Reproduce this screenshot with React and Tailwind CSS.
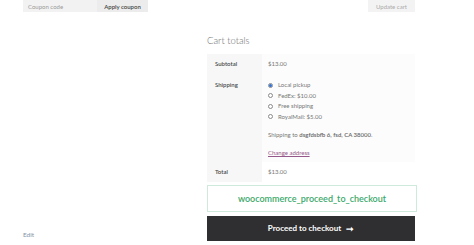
import React from "react";

const rates = [
  { id: "local", label: "Local pickup", checked: true },
  { id: "fedex", label: "FedEx: $10.00" },
  { id: "free", label: "Free shipping" },
  { id: "royal", label: "RoyalMail: $5.00" },
];

const Radio = ({ checked }) => (
  <span className="flex h-[5px] w-[5px] items-center justify-center rounded-full border-[0.8px] border-[#8a8a8a] bg-white">
    {checked && <span className="h-[3px] w-[3px] rounded-full bg-[#2f6fd6]" />}
  </span>
);

const CartTotals = () => (
  <div className="flex w-[210px] flex-col">
    <h2 className="mt-[23px] text-[9.5px] leading-[12px] font-light text-[#6d6d6d]">Cart totals</h2>

    <div className="mt-[7px] flex w-[208px] flex-col text-[6px] leading-[10px]">
      {/* subtotal */}
      <div className="flex">
        <div className="w-[55px] bg-[#f7f7f7] pt-[5px] pb-[6px] pl-[8px] font-semibold text-[#4a4a4a]">Subtotal</div>
        <div className="flex-1 bg-[#fcfcfc] pt-[5px] pb-[6px] pl-[6px] text-[#777]">$13.00</div>
      </div>

      {/* shipping */}
      <div className="flex">
        <div className="w-[55px] bg-[#f7f7f7] pt-[5px] pl-[8px] font-semibold text-[#4a4a4a]">Shipping</div>
        <div className="flex-1 bg-[#fcfcfc] pt-[5px] pb-[4px] pl-[6px] text-[#777]">
          <ul className="flex flex-col gap-[0.6px]">
            {rates.map((r) => (
              <li key={r.id} className="flex items-center gap-[5px]">
                <Radio checked={r.checked} />
                <span>{r.label}</span>
              </li>
            ))}
          </ul>
          <p className="mt-[8px]">
            Shipping to <span className="font-semibold text-[#666]">dsgfdsbfb 6, fsd, CA 38000</span>.
          </p>
          <a className="mt-[8px] block text-[#96588a] underline" href="#">Change address</a>
        </div>
      </div>

      {/* total */}
      <div className="flex">
        <div className="w-[55px] bg-[#f7f7f7] pt-[5px] pb-[5px] pl-[8px] font-semibold text-[#4a4a4a]">Total</div>
        <div className="flex-1 bg-white pt-[5px] pb-[5px] pl-[6px] text-[#777]">$13.00</div>
      </div>
    </div>

    <div className="mt-[3px] flex h-[27px] w-[210px] items-center justify-center border border-[#cdeadc] bg-white text-[9px] font-semibold text-[#3aa86a]">
      woocommerce_proceed_to_checkout
    </div>

    <button className="mt-[4px] flex h-[25px] w-[208px] items-center justify-center gap-[5px] bg-[#2f2f31] text-[8px] font-bold text-white">
      Proceed to checkout <span className="text-[9px] leading-none">➞</span>
    </button>
  </div>
);

export default function App() {
  return (
    <div className="h-[245px] w-[474px] overflow-hidden bg-white font-['Lato','Open_Sans',sans-serif]">
      {/* coupon row */}
      <div className="ml-[23px] flex h-[12px] w-[392px] text-[6px]">
        <div className="flex w-[74px] items-center bg-[#f2f2f2] pl-[5px] text-[#9a9a9a]">Coupon code</div>
        <div className="flex w-[51px] items-center justify-center bg-[#ececec] font-semibold text-[#444]">Apply coupon</div>
        <div className="flex-1" />
        <div className="flex w-[47px] items-center justify-center bg-[#f3f3f3] text-[#aaa]">Update cart</div>
      </div>

      <div className="flex">
        <div className="flex w-[207px] flex-col justify-end pb-[1px] pl-[23px]">
          <a className="text-[6.5px] text-[#8593a6]" href="#">Edit</a>
        </div>
        <CartTotals />
      </div>
    </div>
  );
}
